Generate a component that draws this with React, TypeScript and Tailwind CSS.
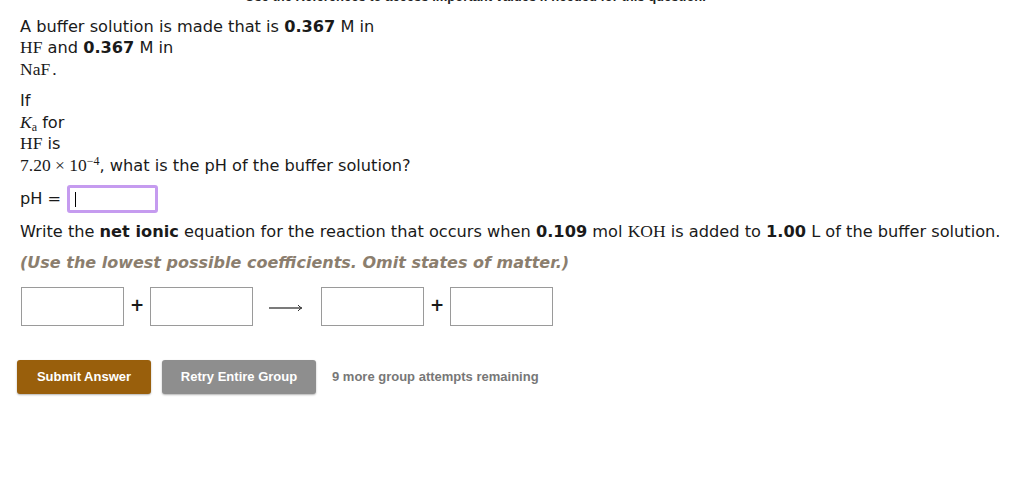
const math = "font-['Liberation_Serif',serif] text-[17.5px] leading-none";

function Box() {
  return <div className="h-[39px] w-[103px] border border-[#9a9a9a] bg-white" />;
}

export default function App() {
  return (
    <div className="h-[482px] w-[1024px] overflow-hidden bg-white font-['DejaVu_Sans',Verdana,sans-serif] text-[16.2px] text-[#1a1a1a]">
      <div className="mt-[-11px] pl-[245px] font-['Liberation_Sans',Arial,sans-serif] text-[13px] font-bold leading-[16px] text-[#222]">
        Use the References to access important values if needed for this question.
      </div>

      <div className="mt-[10.5px] px-[20px] leading-[21.5px]">
        <p>
          A buffer solution is made that is <b>0.367</b> M in
          <br />
          <span className={math}>HF</span> and <b>0.367</b> M in
          <br />
          <span className={math}>
            NaF<span className="ml-[2px]">.</span>
          </span>
        </p>

        <p className="mt-[10px]">
          If
          <br />
          <span className={math + " italic"}>K</span>
          <sub className="font-['Liberation_Serif',serif] text-[12px]">a</sub> for
          <br />
          <span className={math}>HF</span> is
          <br />
          <span className={math}>
            7.20 × 10<sup className="text-[12px]">−4</sup>
          </span>
          , what is the pH of the buffer solution?
        </p>

        <div className="mt-[9px] flex items-center">
          <span>pH =</span>
          <div className="ml-[6px] flex h-[28px] w-[91px] items-center rounded-[3px] border-[3px] border-[#c59bef] pl-[5px]">
            <span className="h-[15px] w-px bg-black" />
          </div>
        </div>

        <p className="mt-[8px]">
          Write the <b>net ionic</b> equation for the reaction that occurs when <b>0.109</b> mol{" "}
          <span className={math}>KOH</span> is added to <b>1.00</b> L of the buffer solution.
        </p>
        <p className="mt-[9.5px] text-[16px] font-bold italic text-[#8b7e6e]">
          (Use the lowest possible coefficients. Omit states of matter.)
        </p>

        <div className="mt-[13px] flex items-center">
          <div className="ml-px">
            <Box />
          </div>
          <span className="w-[26px] text-center text-[17px] font-bold">+</span>
          <Box />
          <svg width="34" height="8" viewBox="0 0 34 8" className="ml-[16px] mr-[18px] mt-[4px]">
            <line x1="0" y1="4" x2="32" y2="4" stroke="#333" strokeWidth="1.3" />
            <path d="M29 1 Q31 3.5 33 4 Q31 4.5 29 7" fill="none" stroke="#333" strokeWidth="1" />
          </svg>
          <Box />
          <span className="w-[26px] text-center text-[17px] font-bold">+</span>
          <Box />
        </div>

        <div className="mt-[34px] ml-[-3px] flex items-center font-['Liberation_Sans',Arial,sans-serif] text-[13px] font-bold">
          <button className="h-[34px] w-[134px] rounded-[3px] bg-[#995f0c] text-white shadow-[0_1px_2px_rgba(0,0,0,0.3)]">
            Submit Answer
          </button>
          <button className="ml-[11px] h-[34px] w-[154px] rounded-[3px] bg-[#8e8e8e] text-white shadow-[0_1px_2px_rgba(0,0,0,0.3)]">
            Retry Entire Group
          </button>
          <span className="ml-[16px] text-[#777]">9 more group attempts remaining</span>
        </div>
      </div>
    </div>
  );
}
